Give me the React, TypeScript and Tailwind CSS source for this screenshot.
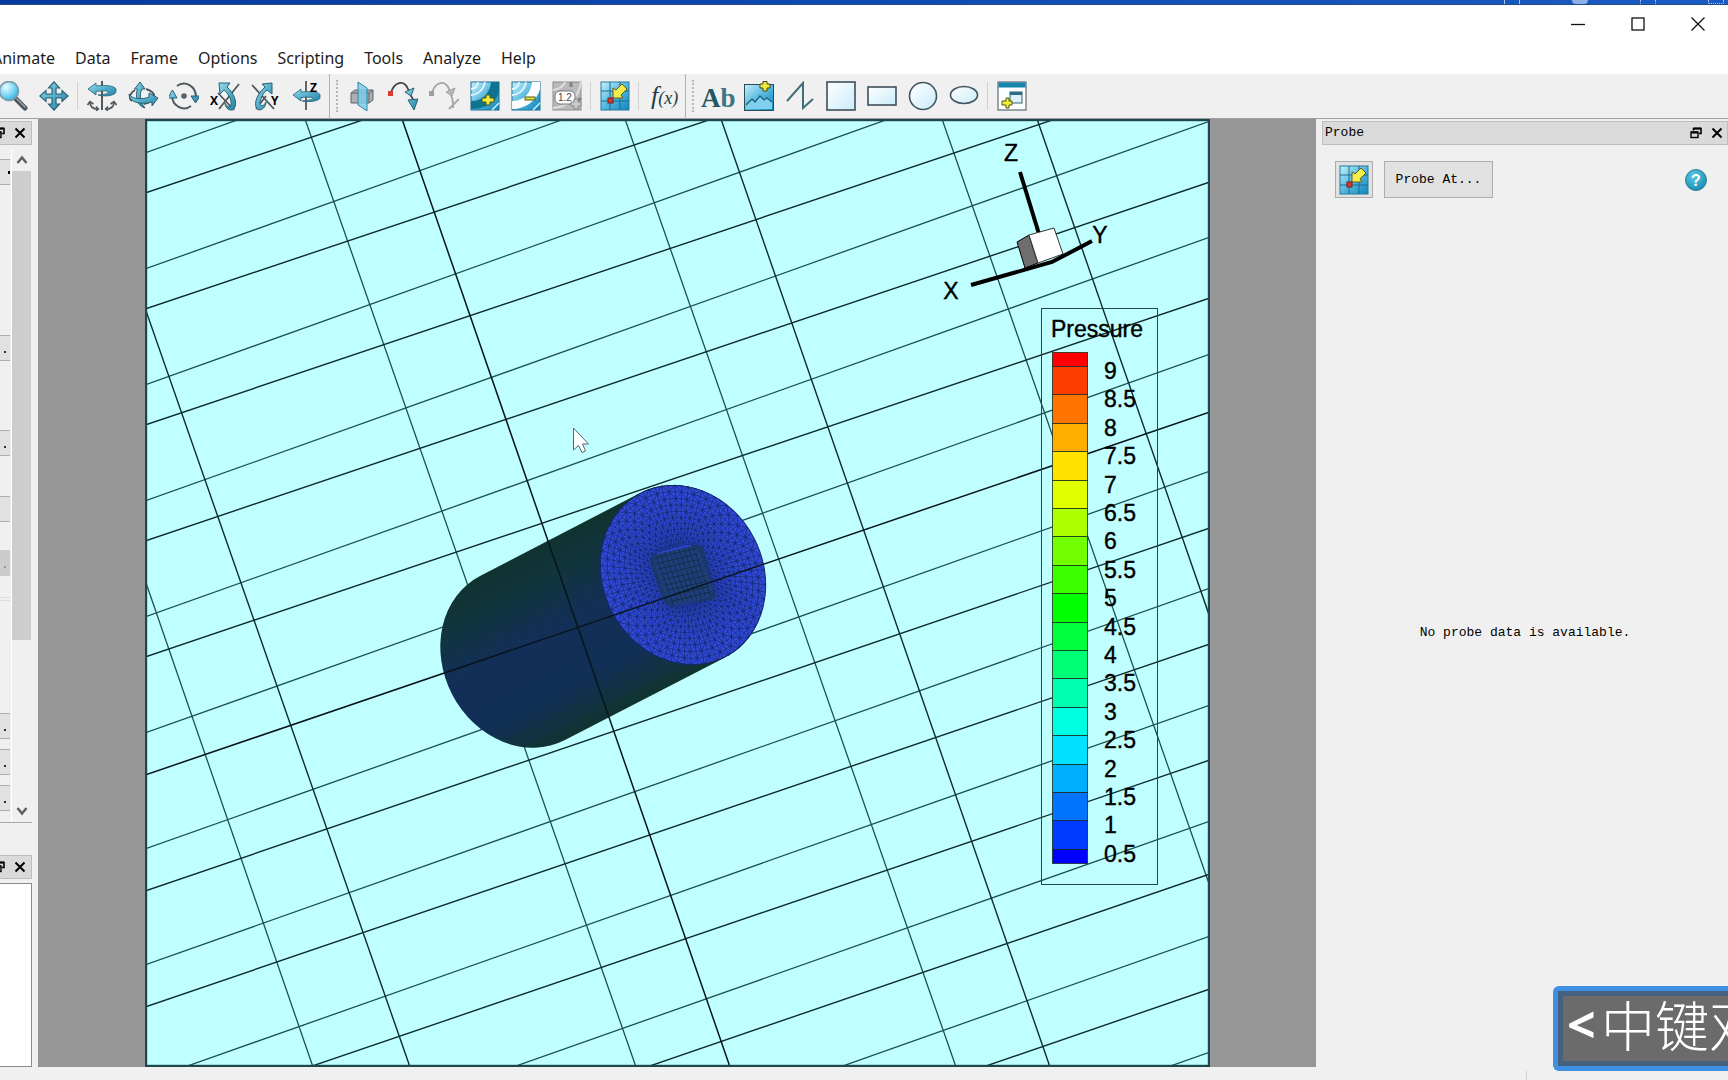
import type { ReactNode } from 'react'

const MENUS = ['Animate', 'Data', 'Frame', 'Options', 'Scripting', 'Tools', 'Analyze', 'Help']

const MONO = "font-['Liberation_Mono','Noto_Sans_CJK_SC',monospace]"

// Contour legend, hottest band first
const BANDS = [
  '#ff0000', '#ff3c00', '#ff7400', '#ffae00', '#ffe200', '#e2ff00', '#aeff00', '#74ff00', '#3cff00', '#00ff00',
  '#00ff3c', '#00ff74', '#00ffae', '#00ffe2', '#00e2ff', '#00aeff', '#0074ff', '#003cff', '#0000ff',
]
const LEVELS = ['9', '8.5', '8', '7.5', '7', '6.5', '6', '5.5', '5', '4.5', '4', '3.5', '3', '2.5', '2', '1.5', '1', '0.5']

/* ---------- toolbar icons (30x30) ---------- */

function Icon({ children }: { children: ReactNode }) {
  return (
    <svg width="30" height="30" viewBox="0 0 30 30" fill="none" aria-hidden="true">
      {children}
    </svg>
  )
}

// Gradients shared by every icon on the page
function IconDefs() {
  return (
    <svg width="0" height="0" className="absolute" aria-hidden="true">
      <defs>
        <linearGradient id="teal" x1="0" y1="0" x2="1" y2="1">
          <stop offset="0" stopColor="#8fdcf0" />
          <stop offset="1" stopColor="#1d83a6" />
        </linearGradient>
        <linearGradient id="tile" x1="0" y1="0" x2="1" y2="1">
          <stop offset="0" stopColor="#c4f0fb" />
          <stop offset="0.5" stopColor="#56b8de" />
          <stop offset="1" stopColor="#0f86bd" />
        </linearGradient>
        <linearGradient id="paper" x1="0" y1="0" x2="1" y2="1">
          <stop offset="0" stopColor="#ffffff" />
          <stop offset="1" stopColor="#c9ecfa" />
        </linearGradient>
        <radialGradient id="lens" cx="0.35" cy="0.3" r="0.8">
          <stop offset="0" stopColor="#e8fcff" />
          <stop offset="0.6" stopColor="#6fd2f2" />
          <stop offset="1" stopColor="#2ba5d4" />
        </radialGradient>
        <radialGradient id="help" cx="0.4" cy="0.3" r="0.8">
          <stop offset="0" stopColor="#5cc9e4" />
          <stop offset="1" stopColor="#1387ad" />
        </radialGradient>
      </defs>
    </svg>
  )
}

const ZoomIcon = () => (
  <Icon>
    <path d="M18 18 L27 27" stroke="#4c555c" strokeWidth="5" strokeLinecap="round" />
    <path d="M19 18 L27 26" stroke="#9aa6ad" strokeWidth="1.5" strokeLinecap="round" />
    <circle cx="11" cy="10" r="9.5" fill="url(#lens)" stroke="#7d97a3" strokeWidth="1.6" />
  </Icon>
)

const MoveIcon = () => (
  <Icon>
    <path
      d="M15 0.8 L20.5 7 H17 V13 H23 V9.5 L29.2 15 L23 20.5 V17 H17 V23 H20.5 L15 29.2 L9.5 23 H13 V17 H7 V20.5 L0.8 15 L7 9.5 V13 H13 V7 H9.5 Z"
      fill="url(#teal)"
      stroke="#2d6072"
      strokeWidth="1.2"
    />
  </Icon>
)

const RotateSphereIcon = () => (
  <Icon>
    <path d="M15 0 V29" stroke="#50585d" strokeWidth="2" />
    <path
      d="M1 8 L9 2 V5 C18 3.500 28 5 29 8 V11 C28 14.500 19 16 11 14 C19 13.500 22 12 21 10.500 C19 9.500 14 10 9 10.500 V14 Z"
      fill="url(#teal)"
      stroke="#2d6072"
      strokeWidth="0.8"
    />
    <path d="M3 21 C3 26 6 28 11 28 M27 21 C27 26 24 28 19 28" stroke="#50585d" strokeWidth="1.8" />
    <path d="M0.5 24 L3 20.500 L6.500 23 M29.5 24 L27 20.500 L23.500 23" stroke="#50585d" strokeWidth="1.6" />
    <path d="M9 25.500 L11.500 28 L9 30 M21 25.500 L18.500 28 L21 30" stroke="#50585d" strokeWidth="1.4" />
  </Icon>
)

const RolloverIcon = () => (
  <Icon>
    <path d="M16 23 C28 20 30 12 18 8 M7 9 C2 12 0 17 4 20" stroke="#50585d" strokeWidth="2" />
    <path
      d="M12 1 L17 8 H14 C11 14 12 21 17 27 C9 25 7 15 9.5 8 H6.5 Z"
      fill="url(#teal)"
      stroke="#2d6072"
    />
    <path
      d="M1 13 C3 18 14 19 21 16 V12 L30 17 L24 25 V21 C14 24 1 22 1 13 Z"
      fill="url(#teal)"
      stroke="#2d6072"
    />
  </Icon>
)

const TwistIcon = () => (
  <Icon>
    <path d="M8 5 C16 -1 27 5 27 16 M22 25 C14 31 3 25 3 14" stroke="#50585d" strokeWidth="2" />
    <path d="M22 15 H31 L26.500 22 Z M-1 17 L3.500 9 L8 17 Z" fill="url(#teal)" stroke="#2d6072" />
    <circle cx="15" cy="15" r="2.8" fill="#5b6368" />
  </Icon>
)

const AxisXIcon = () => (
  <Icon>
    <path d="M29 3 L9 28 M8 12 L24 29" stroke="#50585d" strokeWidth="1.8" />
    <path
      d="M9 2 L20 2 L17 6 C24 12 28 22 24 28 C20 31 15 27 15 22 C17 26 20 27 21 24 C22 19 18 12 14 9 L10 13 Z"
      fill="url(#teal)"
      stroke="#2d6072"
    />
    <text x="0" y="24" fontSize="12" fontWeight="700" fill="#000" fontFamily="Open Sans, sans-serif">X</text>
  </Icon>
)

const AxisYIcon = () => (
  <Icon>
    <path d="M1 4 L23 28 M15 15 L5 28" stroke="#50585d" strokeWidth="1.8" />
    <path
      d="M21 2 L11 3 L14 6 C7 12 2 22 6 28 C10 31 15 26 15 21 C13 25 10 26 9 23 C9 18 12 12 16 9 L21 13 Z"
      fill="url(#teal)"
      stroke="#2d6072"
    />
    <text x="20" y="24" fontSize="12" fontWeight="700" fill="#000" fontFamily="Open Sans, sans-serif">Y</text>
  </Icon>
)

const AxisZIcon = () => (
  <Icon>
    <path d="M14 0 V29" stroke="#50585d" strokeWidth="1.8" />
    <path
      d="M1 14 L9 8 V11 C18 10 28 11 28 14 V17 C27 20 18 21.5 10 20 C19 19 22 18 21 17 C19 16 14 16 9 16.5 V20 Z"
      fill="url(#teal)"
      stroke="#2d6072"
      strokeWidth="0.8"
    />
    <text x="18" y="11" fontSize="12" fontWeight="700" fill="#000" fontFamily="Open Sans, sans-serif">Z</text>
  </Icon>
)

const SliceIcon = () => (
  <Icon>
    <path d="M4 12 L8 9 H26 V19 L22 22 H4 Z" fill="#a9b0b4" stroke="#5e666a" />
    <path d="M4 12 H22 V22 M22 12 L26 9" stroke="#5e666a" />
    <path d="M11 1 L20 7 V30 L11 24 Z" fill="#7dcbe8" fillOpacity="0.85" stroke="#2f87a8" />
  </Icon>
)

const StreamIcon = () => (
  <Icon>
    <path d="M3 12 C6 1 16 -2 20 8 C22 14 24 17 26 20" stroke="#3e464a" strokeWidth="1.8" />
    <rect x="0" y="10" width="5" height="5" fill="#d93a34" />
    <path d="M17 11 L26 7 L23 15 Z M20 19 L30 18 L26 29 Z" fill="url(#teal)" stroke="#2d6072" />
  </Icon>
)

const StreamTermIcon = () => (
  <Icon>
    <path d="M3 12 C6 1 16 -2 20 8 C22 14 25 18 24 27" stroke="#a6a6a6" strokeWidth="1.8" />
    <rect x="0" y="10" width="5" height="5" fill="#9e9e9e" />
    <path d="M17 11 L26 7 L23 15 Z" fill="#b8b8b8" stroke="#a0a0a0" />
    <path d="M20 28 L30 18" stroke="#a6a6a6" strokeWidth="1.8" />
  </Icon>
)

const ContourAddIcon = () => (
  <Icon>
    <rect x="1" y="1" width="28" height="28" fill="url(#tile)" stroke="#1c6c93" />
    <path d="M21 1 H29 V11 C26 22 15 28 1 28 V20 C13 20 20 12 21 1 Z" fill="#0f7391" />
    <path d="M15 1 C14 8 8 14 1 14 M8 1 C8 5 5 8 1 8" stroke="#dff6fd" strokeWidth="1.8" />
    <path d="M29 22 L22 29" stroke="#d8f4fc" strokeWidth="1.5" />
    <path d="M16 14 H20 V17 H24 V21 H20 V24 H16 V21 H12 V17 H16 Z" fill="#f2ea3a" stroke="#4b5a1a" />
  </Icon>
)

const ContourRemoveIcon = () => (
  <Icon>
    <rect x="1" y="1" width="28" height="28" fill="url(#tile)" stroke="#1c6c93" />
    <path d="M21 1 H29 V8 C26 20 14 28 1 28 V20 C13 20 20 12 21 1 Z" fill="#ffffff" />
    <path d="M15 1 C14 8 8 14 1 14 M8 1 C8 5 5 8 1 8" stroke="#dff6fd" strokeWidth="1.8" />
    <path d="M29 22 L22 29" stroke="#d8f4fc" strokeWidth="1.5" />
    <rect x="14" y="16" width="10" height="3" fill="#e6e03a" stroke="#4b5a1a" />
  </Icon>
)

const LabelAddIcon = () => (
  <Icon>
    <rect x="1" y="1" width="28" height="28" fill="#b9b9b9" stroke="#8c8c8c" />
    <path d="M1 9 C8 8 12 5 13 1 M1 27 C16 26 27 16 29 1" stroke="#dedede" strokeWidth="2" />
    <path d="M19 1 V6 M26 20 L29 17" stroke="#838383" strokeWidth="3" />
    <rect x="3" y="10" width="20" height="13" rx="5" fill="#fff" stroke="#777" />
    <text x="6" y="20" fontSize="10" fill="#444" fontFamily="Liberation Sans, sans-serif">1.2</text>
    <path d="M22 18 H26 V21 H29 V25 H26 V28 H22 V25 H19 V21 H22 Z" fill="#c9c9c9" stroke="#8a8a8a" />
  </Icon>
)

const ProbeIcon = () => (
  <Icon>
    <rect x="1" y="1" width="28" height="28" fill="url(#tile)" stroke="#257a9e" />
    <path d="M10 1 V29 M20 1 V29 M1 10 H29 M1 20 H29" stroke="#1a6d92" />
    <path d="M13 17 V7 L16 9 L22 3 L27 8 L21 14 L23 17 Z" fill="#f5ee4a" stroke="#5d5f22" />
    <rect x="8" y="17" width="5" height="5" fill="#d8382f" stroke="#7d221d" />
  </Icon>
)

const FunctionIcon = () => (
  <Icon>
    <text x="3" y="23" fontSize="26" fontStyle="italic" fill="#1b3d42" fontFamily="Liberation Serif, serif">
      f<tspan fontSize="18">(x)</tspan>
    </text>
  </Icon>
)

const TextIcon = () => (
  <svg width="34" height="30" viewBox="0 0 34 30" aria-hidden="true">
    <text x="0" y="26" fontSize="27" fontWeight="700" fill="#245563" fontFamily="Liberation Serif, serif">
      A<tspan fill="#3b7686">b</tspan>
    </text>
  </svg>
)

const ImageIcon = () => (
  <Icon>
    <rect x="0.5" y="3.5" width="29" height="26" fill="url(#tile)" stroke="#2d4a55" />
    <path d="M2 24 L8 18 L11 21 L16 15 L20 19 L23 17 L28 21 V28 H2 Z" fill="#7fd0ee" />
    <path d="M2 24 L8 18 L11 21 L16 15 L20 19 L23 17 L28 21" stroke="#1d627c" strokeWidth="1.3" />
    <path d="M19 0.5 H23 V3 H26 V7 H23 V10 H19 V7 H16 V3 H19 Z" fill="#f2ea3a" stroke="#3c4a1a" />
  </Icon>
)

const PolylineIcon = () => (
  <Icon>
    <path d="M2 20 L18 2 V27 L28 18" stroke="#3d6e7a" strokeWidth="2" />
  </Icon>
)

const SquareIcon = () => (
  <Icon>
    <rect x="1" y="1" width="28" height="28" fill="url(#paper)" stroke="#3f4f5a" strokeWidth="1.6" />
  </Icon>
)

const RectangleIcon = () => (
  <Icon>
    <rect x="1" y="6" width="28" height="18" fill="url(#paper)" stroke="#3f4f5a" strokeWidth="1.6" />
  </Icon>
)

const CircleIcon = () => (
  <Icon>
    <circle cx="15" cy="15" r="13.5" fill="url(#paper)" stroke="#3f5560" strokeWidth="1.6" />
  </Icon>
)

const EllipseIcon = () => (
  <Icon>
    <ellipse cx="15" cy="14" rx="13.5" ry="8.5" fill="url(#paper)" stroke="#3f5560" strokeWidth="1.6" />
  </Icon>
)

const NewFrameIcon = () => (
  <Icon>
    <rect x="1" y="1" width="28" height="28" fill="#fbfdfe" stroke="#3f4f5a" />
    <rect x="1.5" y="1.5" width="27" height="5" fill="#1586ad" />
    <rect x="13" y="11" width="12" height="11" fill="#dff1f8" stroke="#3a5f72" />
    <rect x="13" y="11" width="12" height="3" fill="#2f6d8c" />
    <path d="M9 17 H12 V20 H15 V24 H12 V27 H9 V24 H5 V20 H9 Z" fill="#f2ea3a" stroke="#4b5a1a" />
  </Icon>
)

const TOOLS: ({ label: string; icon: ReactNode; disabled?: boolean } | 'sep' | 'grip')[] = [
  { label: 'Zoom', icon: <ZoomIcon /> },
  { label: 'Translate', icon: <MoveIcon /> },
  'sep',
  { label: 'Spherical rotate', icon: <RotateSphereIcon /> },
  { label: 'Rollerball rotate', icon: <RolloverIcon /> },
  { label: 'Twist', icon: <TwistIcon /> },
  { label: 'X-axis rotate', icon: <AxisXIcon /> },
  { label: 'Y-axis rotate', icon: <AxisYIcon /> },
  { label: 'Z-axis rotate', icon: <AxisZIcon /> },
  'grip',
  { label: 'Slice', icon: <SliceIcon /> },
  { label: 'Add streamtrace', icon: <StreamIcon /> },
  { label: 'Add streamtrace termination line', icon: <StreamTermIcon />, disabled: true },
  { label: 'Add contour level', icon: <ContourAddIcon /> },
  { label: 'Remove contour level', icon: <ContourRemoveIcon /> },
  { label: 'Add contour label', icon: <LabelAddIcon />, disabled: true },
  'sep',
  { label: 'Probe', icon: <ProbeIcon /> },
  'sep',
  { label: 'Extract function', icon: <FunctionIcon /> },
  'grip',
  { label: 'Text', icon: <TextIcon /> },
  { label: 'Image', icon: <ImageIcon /> },
  { label: 'Polyline', icon: <PolylineIcon /> },
  { label: 'Square', icon: <SquareIcon /> },
  { label: 'Rectangle', icon: <RectangleIcon /> },
  { label: 'Circle', icon: <CircleIcon /> },
  { label: 'Ellipse', icon: <EllipseIcon /> },
  'sep',
  { label: 'New frame', icon: <NewFrameIcon /> },
]

/* ---------- plot ---------- */

// [x1, y1, x2, y2], in plot coordinates
const BACK_LINES: number[][] = [
  ...[-228, -112, 4, 121, 237, 354, 471, 588, 705, 821, 936, 1052].map((right, i) => [145, 153 + i * 116, 1210, right]),
  [305, 119, 636, 1067],
  [625, 119, 956, 1067],
  [942, 119, 1273, 1067],
  [145, 580, 313, 1067],
]
const FRONT_LINES: number[][] = [
  ...[-164, -48, 67, 182, 298].map((right, i) => [145, 193 + i * 116, 1210, right]),
  ...[528, 644, 760, 874, 989].map((right, i) => [145, 891 + i * 116, 1210, right]),
  [145, 308, 410, 1067],
  [721, 119, 1050, 1067],
  [1037, 119, 1366, 1067],
]
const AXIS_LINES: number[][] = [
  [145, 775, 1210, 412],
  [402, 119, 730, 1067],
]

const toPath = (lines: number[][]) => lines.map(([a, b, c, d]) => `M${a} ${b}L${c} ${d}`).join('')

// Triangulated end cap: a square core blended outwards into the pipe's rim
function buildMesh() {
  const [cx, cy] = [683, 575]
  const spokes = 76
  const rings = 11
  const point = (ring: number, spoke: number) => {
    const a = (spoke / spokes) * Math.PI * 2
    const [c, s] = [Math.cos(a), Math.sin(a)]
    const m = Math.pow(c ** 6 + s ** 6, 1 / 6)
    const t = Math.pow(ring / rings, 1.25)
    const sx = (c / m) * 23 + (s / m) * 10
    const sy = (c / m) * -6 + (s / m) * 27
    const ox = c * 77 + s * 28
    const oy = c * -20 + s * 88
    return `${(cx + sx * (1 - t) + ox * t).toFixed(1)} ${(cy + sy * (1 - t) + oy * t).toFixed(1)}`
  }
  let mesh = ''
  for (let r = 0; r < rings; r++) {
    for (let k = 0; k < spokes; k++) {
      const diagonal = (r + k) % 2 ? `M${point(r, k)}L${point(r + 1, k + 1)}` : `M${point(r, k + 1)}L${point(r + 1, k)}`
      mesh += `M${point(r, k + 1)}L${point(r, k)}L${point(r + 1, k)}${diagonal}`
    }
  }
  let core = ''
  for (let i = -8; i <= 8; i += 2) {
    const t = i / 10
    core += `M${cx + t * 23 - 9} ${cy - t * 6 - 25}L${cx + t * 23 + 9} ${cy - t * 6 + 25}`
    core += `M${cx + t * 10 - 21} ${cy + t * 27 + 5}L${cx + t * 10 + 21} ${cy + t * 27 - 5}`
  }
  return { mesh, core }
}

const { mesh: CAP_MESH, core: CAP_CORE } = buildMesh()

function Plot() {
  return (
    <svg
      viewBox="145 119 1065 948"
      className="block h-full w-full"
      role="img"
      aria-label="Pressure contour plot of a meshed cylinder"
      fontFamily="Liberation Sans, Arial, sans-serif"
    >
      <defs>
        <linearGradient id="pipe" gradientUnits="userSpaceOnUse" x1="560" y1="534" x2="645" y2="698">
          <stop offset="0" stopColor="#10332f" />
          <stop offset="0.2" stopColor="#12343f" />
          <stop offset="0.45" stopColor="#132f58" />
          <stop offset="0.75" stopColor="#122f57" />
          <stop offset="0.92" stopColor="#12333f" />
          <stop offset="1" stopColor="#10332f" />
        </linearGradient>
      </defs>
      <rect x="145" y="119" width="1065" height="948" fill="#c0ffff" />
      <path d={toPath(BACK_LINES)} stroke="#1f4f52" strokeWidth="1.3" fill="none" />
      <path d={toPath(FRONT_LINES)} stroke="#0c2c30" strokeWidth="1.4" fill="none" />

      {/* pipe */}
      <path
        d="M640 493 L480 576 A79 92 -27.4 0 0 565 740 L726 657 A79 92 -27.4 0 0 640 493 Z"
        fill="url(#pipe)"
      />
      <ellipse cx="683" cy="575" rx="80" ry="92" transform="rotate(-27.4 683 575)" fill="#3048d8" stroke="#16266e" />
      <path d={CAP_MESH} stroke="#13286a" strokeWidth="0.7" fill="none" />
      <path d="M653 555 L695 545 Q702 544 704 550 L715 594 Q716 599 711 600 L673 606 Q665 607 663 600 L650 562 Z" fill="#1a3a58" fillOpacity="0.7" />
      <path d={CAP_CORE} stroke="#122c3c" strokeWidth="0.8" fill="none" />
      <path d={toPath(AXIS_LINES)} stroke="#06161c" strokeWidth="1.5" fill="none" />

      {/* orientation triad */}
      <path d="M1020 172 L1039 234" stroke="#000" strokeWidth="4" />
      <path d="M1017 242 L1029 235 L1038 263 L1025 268 Z" fill="#6e6e6e" stroke="#000" />
      <path d="M1029 235 L1054 228 L1063 254 L1038 263 Z" fill="#fff" stroke="#333" />
      <path d="M971 285 L1052 262 L1092 241" stroke="#000" strokeWidth="4" fill="none" />
      <g fontSize="23" textAnchor="middle" fill="#000" stroke="#000" strokeWidth="0.4">
        <text x="1011" y="161">Z</text>
        <text x="951" y="299">X</text>
        <text x="1100" y="243">Y</text>
      </g>

      {/* legend */}
      <rect x="1041.5" y="308.5" width="116" height="576" fill="none" stroke="#1f4a4a" />
      <g fill="#000" stroke="#000" strokeWidth="0.4">
        <text x="1051" y="337" fontSize="23">Pressure</text>
        {LEVELS.map((level, i) => (
          <text key={level} x="1104" y={Math.round(379 + i * 28.4)} fontSize="23">{level}</text>
        ))}
      </g>
      {BANDS.map((color, i) => {
        const top = i === 0 ? 352 : Math.round(366 + (i - 1) * 28.4)
        const bottom = i === BANDS.length - 1 ? 863 : Math.round(366 + i * 28.4)
        return (
          <rect key={color} x="1052.5" y={top + 0.5} width="35" height={bottom - top} fill={color} stroke="#1c2b1c" strokeOpacity="0.8" />
        )
      })}

      {/* mouse pointer */}
      <path d="M573.5 428 V450 L578.5 445.500 L582 452.500 L585.500 451 L582.500 444 H588.500 Z" fill="#fff" stroke="#55666a" />
      <rect x="146" y="120" width="1063" height="946" fill="none" stroke="#1d474d" strokeWidth="2.4" />
    </svg>
  )
}

/* ---------- panels ---------- */

function DockButtons() {
  return (
    <>
      <button type="button" aria-label="Float panel" className="shrink-0">
        <svg width="12" height="12" viewBox="0 0 12 12" fill="none" stroke="#000" aria-hidden="true">
          <path d="M3.500 3.500 V1.500 H11 V6.500 H9" strokeWidth="1.6" />
          <path d="M3.500 1.500 H11" strokeWidth="2" />
          <rect x="1" y="5" width="7" height="5.500" strokeWidth="1.4" />
          <path d="M1 5.500 H8" strokeWidth="2" />
        </svg>
      </button>
      <button type="button" aria-label="Close panel" className="shrink-0">
        <svg width="12" height="12" viewBox="0 0 12 12" stroke="#000" strokeWidth="2" aria-hidden="true">
          <path d="M1.500 1.500 L10.500 10.500 M10.500 1.500 L1.500 10.500" />
        </svg>
      </button>
    </>
  )
}

function SidebarStub({ className = '' }: { className?: string }) {
  return (
    <button
      type="button"
      aria-label="Details"
      className={`flex h-[26px] w-full shrink-0 items-center justify-end border-y border-[#adadad] bg-[#e1e1e1] pr-1 ${className}`}
    >
      <span className="mt-2 size-[2px] bg-[#333]" />
    </button>
  )
}

function Sidebar() {
  return (
    <aside className="flex w-[38px] shrink-0 flex-col overflow-hidden bg-[#f0f0f0] pr-1.5">
      <div className="mt-0.5 flex h-6 shrink-0 items-center justify-end gap-[9px] border border-l-0 border-[#bdbdbd] bg-[#dadada] pr-[5px]">
        <DockButtons />
      </div>
      <div className="mt-1 flex h-[674px] shrink-0 border-b border-[#a8a8a8]">
        <div className="flex w-2.5 flex-col pt-2.5">
          <button
            type="button"
            aria-label="Zone options"
            className="flex h-[26px] w-full shrink-0 items-center justify-end border-y border-[#adadad] bg-[#e1e1e1]"
          >
            <span className="h-[3px] w-0.5 bg-black" />
          </button>
          <SidebarStub className="mt-[150px]" />
          <SidebarStub className="mt-[69px]" />
          <div className="mt-10 h-[26px] shrink-0 border-y border-[#adadad] bg-[#e1e1e1]" />
          <div className="mt-7 flex h-[26px] shrink-0 items-center justify-end bg-[#cccccc] pr-1">
            <span className="mt-2 size-[2px] bg-[#999]" />
          </div>
          <div className="mt-[21px] h-1 shrink-0 border-y border-[#dcdcdc]" />
          <SidebarStub className="mt-28" />
          <SidebarStub className="mt-2.5" />
          <SidebarStub className="mt-2.5" />
        </div>
        <div className="ml-px flex w-5 flex-col items-center border-l border-white bg-[#f0f0f0]">
          <svg width="12" height="22" viewBox="0 0 12 22" fill="none" stroke="#606060" strokeWidth="2.5" aria-hidden="true">
            <path d="M1.500 14 L6 8.500 L10.500 14" />
          </svg>
          <div className="h-[469px] w-full bg-[#cdcdcd]" />
          <div className="flex-1" />
          <svg width="12" height="22" viewBox="0 0 12 22" fill="none" stroke="#606060" strokeWidth="2.5" aria-hidden="true">
            <path d="M1.500 8 L6 13.500 L10.500 8" />
          </svg>
        </div>
      </div>
      <div className="mt-8 flex h-6 shrink-0 items-center justify-end gap-[9px] border border-l-0 border-[#bdbdbd] bg-[#dadada] pr-[5px]">
        <DockButtons />
      </div>
      <div className="mt-1 flex-1 border border-l-0 border-[#8c8c8c] bg-white" />
    </aside>
  )
}

function ProbePanel() {
  return (
    <aside className="flex w-[412px] shrink-0 flex-col bg-[#f0f0f0] pl-1.5">
      <div className="mt-0.5 flex h-6 shrink-0 items-center border border-[#bdbdbd] bg-[#dadada] pr-1 pl-0.5">
        <h2 className={`flex-1 text-[13px] text-black ${MONO}`}>Probe</h2>
        <div className="flex gap-[9px]">
          <DockButtons />
        </div>
      </div>
      <div className="flex items-center pt-4 pr-[21px] pl-[13px]">
        <button
          type="button"
          aria-label="Probe tool"
          className="flex h-[37px] w-[38px] items-center justify-center border border-[#adadad] bg-[#e1e1e1]"
        >
          <ProbeIcon />
        </button>
        <button
          type="button"
          className={`ml-[11px] h-[37px] w-[109px] border border-[#adadad] bg-[#e1e1e1] text-[13px] text-black ${MONO}`}
        >
          Probe At...
        </button>
        <button type="button" aria-label="Help" className="ml-auto">
          <svg width="22" height="22" viewBox="0 0 22 22" aria-hidden="true">
            <circle cx="11" cy="11" r="10.500" fill="url(#help)" stroke="#2b7f99" />
            <text x="11" y="17" fontSize="16" fontWeight="700" textAnchor="middle" fill="#fff" fontFamily="Liberation Sans, sans-serif">?</text>
          </svg>
        </button>
      </div>
      <p className={`flex flex-1 items-center justify-center text-[13px] text-black ${MONO}`}>
        No probe data is available.
      </p>
    </aside>
  )
}

export default function App() {
  return (
    <div className="relative flex h-screen flex-col overflow-hidden bg-[#f0f0f0] font-['Noto_Sans','Noto_Sans_CJK_SC',sans-serif]">
      <IconDefs />
      <div className="flex h-[5px] shrink-0 justify-end gap-[52px] border-b border-[#244a86] bg-linear-to-r from-[#063a9e] via-[#0f4ab0] to-[#1a5cc4] pr-1">
        <span className="h-1 w-4 border-x border-[#a9c4ec]" />
        <span className="h-1 w-4 rounded-b-full bg-[#8fb2e6]" />
        <span className="h-1 w-4 border-x border-dotted border-[#a9c4ec]" />
        <span className="h-1 w-4 border-x border-b border-dotted border-[#a9c4ec]" />
      </div>

      {/* title bar */}
      <header className="shrink-0 bg-white">
        <div className="flex h-[37px] justify-end">
          <button type="button" aria-label="Minimize" className="flex w-[60px] items-center justify-center">
            <svg width="14" height="14" viewBox="0 0 14 14" stroke="#111" aria-hidden="true">
              <path d="M0 7.500 H14" strokeWidth="1.3" />
            </svg>
          </button>
          <button type="button" aria-label="Maximize" className="flex w-[60px] items-center justify-center">
            <svg width="14" height="14" viewBox="0 0 14 14" fill="none" stroke="#111" aria-hidden="true">
              <rect x="1" y="1" width="12" height="12" strokeWidth="1.3" />
            </svg>
          </button>
          <button type="button" aria-label="Close" className="flex w-[60px] items-center justify-center">
            <svg width="14" height="14" viewBox="0 0 14 14" stroke="#111" aria-hidden="true">
              <path d="M0.500 0.500 L13.500 13.500 M13.500 0.500 L0.500 13.500" strokeWidth="1.3" />
            </svg>
          </button>
        </div>
        <nav className="-ml-[18px] flex h-8 items-center">
          {MENUS.map((menu) => (
            <button key={menu} type="button" className="px-2.5 text-base leading-5 text-[#1c1c1c]">
              {menu}
            </button>
          ))}
        </nav>
      </header>

      {/* toolbar */}
      <div role="toolbar" className="-ml-2 flex h-11 shrink-0 items-stretch">
        {TOOLS.map((tool, i) => {
          if (tool === 'sep') {
            return (
              <span key={i} className="flex w-[7px] shrink-0 justify-center py-2">
                <span className="w-px bg-[#d0d0d0]" />
              </span>
            )
          }
          if (tool === 'grip') {
            return (
              <span key={i} className="flex w-3.5 shrink-0 gap-1.5 pl-0.5">
                <span className="w-px bg-[#b0b0b0]" />
                <span className="my-1.5 border-l-2 border-dotted border-[#b8b8b8]" />
              </span>
            )
          }
          return (
            <button
              key={tool.label}
              type="button"
              aria-label={tool.label}
              disabled={tool.disabled}
              className="flex w-[41px] shrink-0 items-center justify-center"
            >
              {tool.icon}
            </button>
          )
        })}
      </div>

      {/* workspace */}
      <div className="flex min-h-0 flex-1 border-t border-[#a0a0a0]">
        <Sidebar />
        <main className="min-w-0 flex-1 bg-[#969696] pr-[106px] pl-[107px]">
          <Plot />
        </main>
        <ProbePanel />
      </div>
      <footer className="flex h-[13px] shrink-0 justify-end pr-[201px]">
        <span className="mt-1 w-px bg-[#d0d0d0]" />
      </footer>

      {/* key hint running off the right edge */}
      <div className="absolute right-0 bottom-[9px] h-[85px] w-[175px] overflow-hidden rounded-l-md border-[5px] border-r-0 border-[#3f90e2]">
        <div className="flex h-full items-center border-[5px] border-r-0 border-[#466180] bg-[#6b6b6b] pb-2.5 pl-1 whitespace-nowrap text-white">
          <span className="w-[34px] shrink-0 text-[50px] leading-none font-bold">&lt;</span>
          <span className="shrink-0 font-['Noto_Sans_CJK_SC',sans-serif] text-[54px] leading-none font-light">中键双</span>
        </div>
      </div>
    </div>
  )
}
